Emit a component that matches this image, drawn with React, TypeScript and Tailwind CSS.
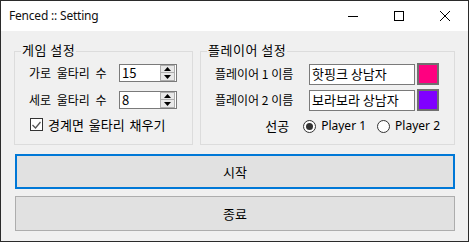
import React from 'react';

const Spin: React.FC<{ value: string }> = ({ value }) => (
  <div className="flex h-[18px] w-[58px] items-center justify-between border border-[#7a7a7a] bg-white">
    <span className="pl-[2px] text-[13px] leading-[16px]">{value}</span>
    <div className="mr-[1px] flex h-[16px] w-[15px] flex-col border border-[#adadad] bg-[#e8e8e8]">
      <div className="flex h-1/2 items-center justify-center border-b border-[#adadad]">
        <svg width="7" height="4" viewBox="0 0 7 4"><path d="M3.5 0 L7 4 L0 4 Z" fill="#000" /></svg>
      </div>
      <div className="flex h-1/2 items-center justify-center">
        <svg width="7" height="4" viewBox="0 0 7 4"><path d="M0 0 L7 0 L3.5 4 Z" fill="#000" /></svg>
      </div>
    </div>
  </div>
);

const Group: React.FC<{ title: string; className: string; children: React.ReactNode }> = ({ title, className, children }) => (
  <div className={'relative h-[94px] border border-[#dcdcdc] ' + className}>
    <span className="absolute -top-[10px] left-[6px] bg-[#f0f0f0] px-[1px] text-[13px] leading-[16px] tracking-[0.5px]">{title}</span>
    {children}
  </div>
);

const Radio: React.FC<{ checked?: boolean }> = ({ checked }) => (
  <span className="flex h-[13px] w-[13px] items-center justify-center rounded-full border border-[#333] bg-white">
    {checked && <span className="h-[7px] w-[7px] rounded-full bg-[#333]" />}
  </span>
);

export default function App() {
  return (
    <div className="flex h-[242px] w-[469px] flex-col border border-[#2b2b2b] bg-[#f0f0f0] font-['Noto_Sans_CJK_KR','Noto_Sans',sans-serif] text-black">
      <div className="flex h-[30px] items-center bg-white">
        <span className="flex-1 pl-[8px] font-['Noto_Sans',sans-serif] text-[12px] tracking-[-0.2px] text-[#111]">Fenced :: Setting</span>
        <div className="flex h-full w-[46px] items-center justify-center">
          <svg width="10" height="10" viewBox="0 0 10 10"><path d="M0 5.5 H10" stroke="#000" strokeWidth="1" /></svg>
        </div>
        <div className="flex h-full w-[46px] items-center justify-center">
          <svg width="10" height="10" viewBox="0 0 10 10"><rect x="0.5" y="0.5" width="9" height="9" fill="none" stroke="#000" strokeWidth="1" /></svg>
        </div>
        <div className="flex h-full w-[46px] items-center justify-center">
          <svg width="10" height="10" viewBox="0 0 10 10"><path d="M0 0 L10 10 M10 0 L0 10" stroke="#000" strokeWidth="1" /></svg>
        </div>
      </div>

      <div className="flex-1 pl-[13px] pr-[13px] pt-[20px]">
        <div className="flex gap-[7px]">
          <Group title="게임 설정" className="w-[179px]">
            <div className="flex flex-col gap-[9px] pl-[14px] pt-[12px] text-[12px]">
              <div className="flex h-[18px] items-center">
                <span className="w-[90px] [word-spacing:3px]">가로 울타리 수</span>
                <Spin value="15" />
              </div>
              <div className="flex h-[18px] items-center">
                <span className="w-[90px] [word-spacing:3px]">세로 울타리 수</span>
                <Spin value="8" />
              </div>
              <div className="flex h-[13px] items-center pl-[1px]">
                <span className="flex h-[13px] w-[13px] items-center justify-center border border-[#333] bg-white">
                  <svg width="9" height="8" viewBox="0 0 9 8"><path d="M0.5 4 L3.5 7 L8.5 1" fill="none" stroke="#555" strokeWidth="1.3" /></svg>
                </span>
                <span className="ml-[5px] text-[13px] [word-spacing:2px]">경계면 울타리 채우기</span>
              </div>
            </div>
          </Group>

          <Group title="플레이어 설정" className="w-[255px]">
            <div className="flex flex-col gap-[4px] pl-[14px] pt-[11px] text-[12px]">
              <div className="flex h-[22px] items-center">
                <span className="w-[94px]">플레이어 1 이름</span>
                <div className="flex h-[21px] w-[106px] items-center border border-[#7a7a7a] bg-white pl-[2px] text-[13px]">핫핑크 상남자</div>
                <div className="ml-[2px] h-[22px] w-[22px] border-2 border-[#707070] bg-[#ff0080]" />
              </div>
              <div className="flex h-[22px] items-center">
                <span className="w-[94px]">플레이어 2 이름</span>
                <div className="flex h-[21px] w-[106px] items-center border border-[#7a7a7a] bg-white pl-[2px] text-[13px]">보라보라 상남자</div>
                <div className="ml-[2px] h-[22px] w-[22px] border-2 border-[#707070] bg-[#8000ff]" />
              </div>
              <div className="mt-[3px] flex h-[16px] items-center justify-end pr-[14px]">
                <span className="text-[13px]">선공</span>
                <span className="ml-[14px]"><Radio checked /></span>
                <span className="ml-[5px] font-['Noto_Sans',sans-serif]">Player 1</span>
                <span className="ml-[11px]"><Radio /></span>
                <span className="ml-[5px] font-['Noto_Sans',sans-serif]">Player 2</span>
              </div>
            </div>
          </Group>
        </div>

        <div className="mt-[9px] flex flex-col gap-[7px] pl-[1px]">
          <button className="h-[35px] w-[440px] border-2 border-[#0078d7] bg-[#e1e1e1] text-[13px]">시작</button>
          <button className="h-[35px] w-[440px] border border-[#adadad] bg-[#e1e1e1] text-[13px]">종료</button>
        </div>
      </div>
    </div>
  );
}
